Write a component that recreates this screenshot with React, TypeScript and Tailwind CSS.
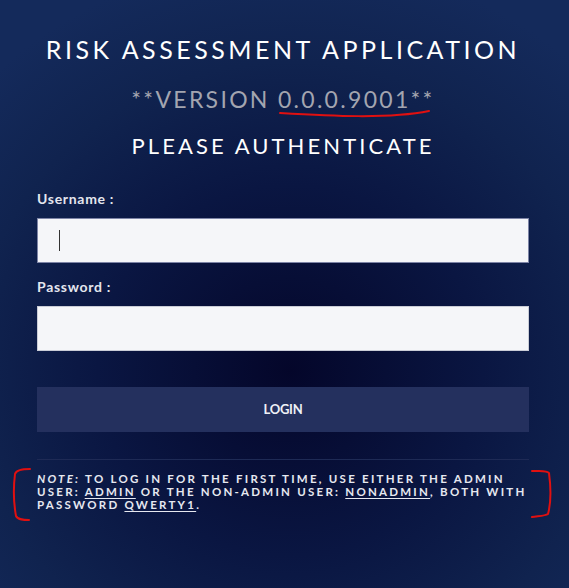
import React from "react";

export default function App() {
    return (
        <div
            className="relative w-[569px] h-[588px] overflow-hidden bg-[radial-gradient(ellipse_75%_70%_at_51%_63%,#04062a_0%,#0a1642_45%,#10234f_75%,#142a5b_100%)]"
            style={{ fontFamily: "Lato, 'Noto Sans', sans-serif" }}
        >
            <div className="pl-[37px] w-[529px] pt-[36px] flex flex-col">
                <h1 className="text-center text-white text-[25px] leading-[26px] tracking-[0.14em] font-normal">
                    RISK ASSESSMENT APPLICATION
                </h1>
                <div className="mt-[24px] text-center text-[#a3a5b0] text-[23px] leading-[26px] tracking-[0.1em]">
                    **VERSION 0.0.0.9001**
                </div>
                <div className="mt-[21px] text-center text-white text-[22px] leading-[26px] tracking-[0.14em]">
                    PLEASE AUTHENTICATE
                </div>

                <form className="mt-[32px] flex flex-col" onSubmit={(e) => e.preventDefault()}>
                    <label className="text-[14px] leading-[16px] font-bold text-[#e4e6ee] tracking-[0.05em]">
                        Username :
                    </label>
                    <div className="mt-[11px] h-[45px] bg-[#f5f6f9] border border-[#7d84a6] flex items-center pl-[21px]">
                        <span className="w-px h-[21px] bg-[#333]" />
                    </div>

                    <label className="mt-[16px] text-[14px] leading-[16px] font-bold text-[#e4e6ee] tracking-[0.05em]">
                        Password :
                    </label>
                    <div className="mt-[11px] h-[45px] bg-[#f5f6f9] border border-[#c9ccd6]" />

                    <button
                        type="submit"
                        className="mt-[36px] h-[45px] bg-[#24305e] text-[#eef0f6] text-[13px] font-bold tracking-[-0.02em]"
                    >
                        LOGIN
                    </button>
                </form>

                <div className="mt-[27px] h-px bg-[#1e2a55]" />

                <p className="mt-[12px] w-[494px] text-[11.5px] leading-[13px] font-bold text-[#e6e8f0] tracking-[0.195em]">
                    <em>NOTE:</em> TO LOG IN FOR THE FIRST TIME, USE EITHER THE ADMIN USER:{" "}
                    <span className="underline underline-offset-2">ADMIN</span> OR THE NON-ADMIN USER:{" "}
                    <span className="underline underline-offset-2">NONADMIN</span>, BOTH WITH PASSWORD{" "}
                    <span className="underline underline-offset-2">QWERTY1</span>.
                </p>
            </div>

            {/* red annotation marks */}
            <svg className="absolute left-0 top-0 pointer-events-none" width="569" height="588">
                <path d="M280 113 C 330 116, 390 119, 429 111" stroke="#e01010" strokeWidth="2" fill="none" strokeLinecap="round" />
                <path d="M30 469 C 22 469, 16 470, 15 474 C 13 490, 14 505, 16 516 C 18 520, 24 520, 29 520" stroke="#e01010" strokeWidth="2" fill="none" strokeLinecap="round" />
                <path d="M532 471 C 540 471, 547 470, 549 473 C 551 488, 551 503, 548 514 C 545 516, 538 516, 532 517" stroke="#e01010" strokeWidth="2" fill="none" strokeLinecap="round" />
            </svg>
        </div>
    );
}
